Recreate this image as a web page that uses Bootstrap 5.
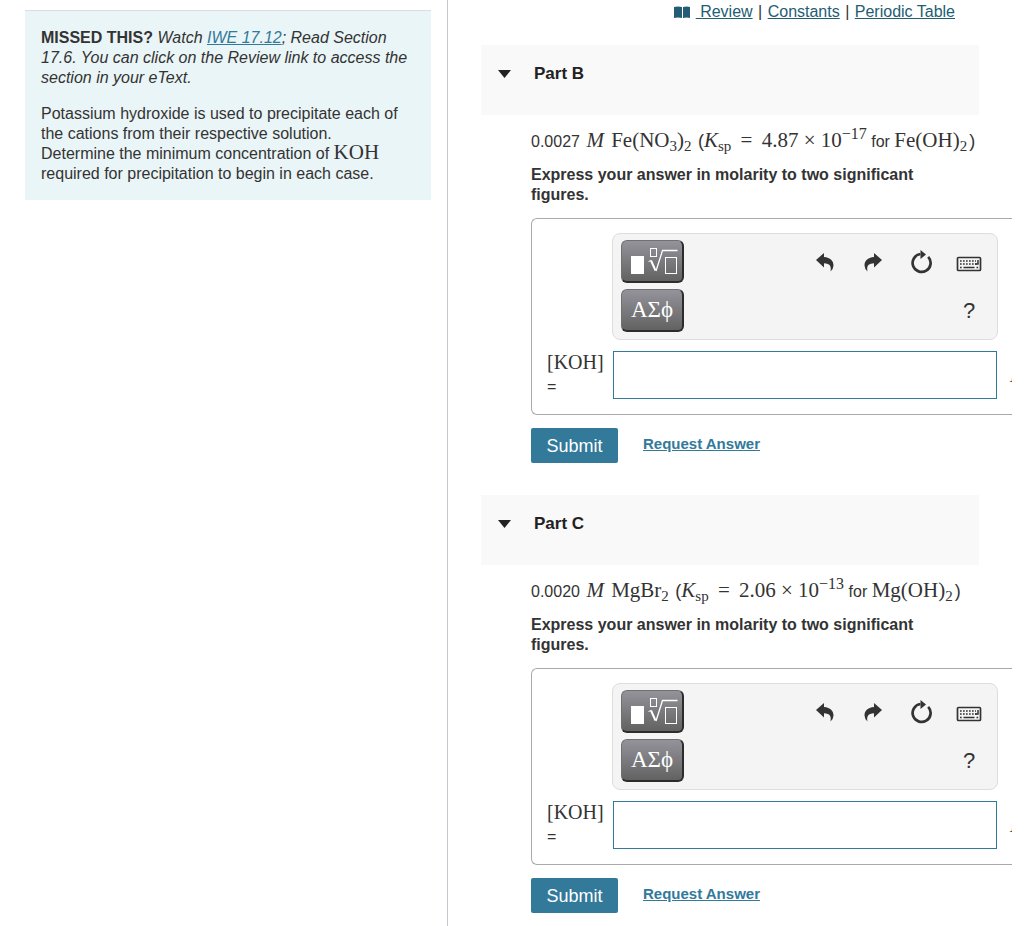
<!DOCTYPE html>
<html lang="en">
<head>
<meta charset="utf-8">
<meta name="viewport" content="width=device-width, initial-scale=1">
<title>Selective precipitation</title>
<link href="https://cdn.jsdelivr.net/npm/bootstrap@5.3.0/dist/css/bootstrap.min.css" rel="stylesheet">
<style>
body { font-family: "Liberation Sans", Arial, sans-serif; font-size: 16px; line-height: 20px; color: #333; background: #fff; }
a { color: #32799a; }
.intro-pane { flex: 0 0 43.75%; padding: 10px 16px 0 25px; border-right: 1px solid #c3c8cd; }
.intro-box { background: #eaf5f7; border-top: 1px solid #d9dddd; padding: 17px 16px 16px; }
.work-pane { padding: 0 12px 12px 33px; }
.top-links { padding: 2px 57px 0 0; height: 45px; }
.top-links a { color: #235d73; }
.sep { margin: 0 1px; }
.part-head { background: #f9f9f9; height: 70px; margin-right: 33px; padding: 19px 16px 0; }
.part-head h2 { font-size: 17px; line-height: 20px; color: #222; margin: 0 0 0 21px; }
.caret-btn { width: 16px; height: 20px; }
.part + .part { margin-top: 32px; }
.part-body { padding-left: 50px; padding-top: 6px; }
.statement { line-height: 40px; white-space: nowrap; }
.instruction { margin: 3px 48px 13px 0; }
.tex { font-family: "Liberation Serif", "Times New Roman", serif; font-size: 21px; line-height: 0; }
.tex sub, .tex sup { font-size: 15px; }
.tex sub { bottom: -4px; }
.tex sup { top: -8px; font-size: 16px; }
.molar { margin: 0 2px; }
.paren { font-size: 18px; margin-left: 2px; }
.op-eq { margin: 0 4px; }
.answer-box { border: 1px solid #aaa; border-right: 0; border-radius: 6px 0 0 6px; padding-top: 14px; padding-bottom: 15px; margin-bottom: 13px; }
.toolbar { margin: 0 14px 11px 80px; padding: 6px 4px 7px 8px; background: #f4f4f4; border: 1px solid #ddd; border-radius: 8px; }
.palette { gap: 6px; }
.palette-btn { width: 63px; height: 43px; padding: 0; border: 1px solid #707070; border-right: 2px solid #2c2c2c; border-bottom: 2px solid #2c2c2c; border-radius: 6px; background: linear-gradient(#94939b, #626262); color: #fff; }
.greek { font-size: 23px; }
.icon-btn { width: 48px; height: 43px; padding: 0; border: 0; background: none; color: #333; }
.help-btn { font-size: 22px; }
.answer-row { padding-left: 15px; }
.answer-label { flex: 0 0 66px; padding-top: 1px; line-height: 23px; }
.answer-label .tex { font-size: 20px; }
.answer-input { height: 48px; border: 1px solid #32799a; outline-color: #32799a; min-width: 0; }
.unit { flex: 0 0 3px; height: 48px; margin-left: 12px; padding-left: 1px; font-style: italic; line-height: 48px; }
.submit-btn { width: 87px; height: 35px; padding: 0; border: 0; border-radius: 2px; background: #32799a; color: #fff; font-size: 18px; }
.request { margin-left: 25px; font-size: 15px; margin-bottom: 3px; }
@media (max-width: 767px) { .intro-pane { border-right: 0; } .statement { white-space: normal; } }
</style>
</head>
<body>
<svg class="d-none" aria-hidden="true">
  <symbol id="templates" viewBox="0 0 52 30">
    <rect x="5" y="10" width="13" height="18" fill="#fff"/>
    <g fill="none" stroke="#fff"><rect x="24.500" y="2.500" width="6" height="8"/><rect x="39.500" y="11.500" width="11" height="16"/><path d="M30 25 36.500 4.500H51.500" stroke-width="1.300"/><path d="M22.500 15.500 25 14.500"/><path d="M25 14.500 29.500 24.500" stroke-width="2"/></g>
  </symbol>
  <symbol id="undo" viewBox="0 0 20 20"><path fill="currentColor" d="M1 8 9 1V5C15.500 5.500 18.500 9 18.500 13.500Q18.500 16.500 15.500 19.500C16.500 14.500 15 11.500 9 11.300V15.500Z"/></symbol>
  <symbol id="reset" viewBox="0 0 24 24"><path fill="none" stroke="currentColor" stroke-width="2.700" d="M19.200 6.800A9 9 0 1 1 11.500 4"/><path fill="currentColor" d="M11.500 0 17 4.500 11.500 9Z"/></symbol>
  <symbol id="keys" viewBox="0 0 26 16">
    <rect x="1.500" y="1.500" width="23" height="13" rx="1" fill="none" stroke="currentColor" stroke-width="1.700"/>
    <path fill="none" stroke="currentColor" stroke-width="1.500" stroke-dasharray="1.700 1.300" d="M4 5H20M4 8H21M4 11.500H6.500M20.500 11.500H23"/>
    <path fill="none" stroke="currentColor" stroke-width="1.500" d="M7.500 11.500H18.500M19 8H22V4"/>
  </symbol>
</svg>

<div class="d-md-flex min-vh-100">
  <aside class="intro-pane">
    <div class="intro-box">
      <p class="mb-3"><strong>MISSED THIS?</strong> <em>Watch <a href="#">IWE 17.12</a>; Read Section 17.6. You can click on the Review link to access the section in your eText.</em></p>
      <p class="mb-0">Potassium hydroxide is used to precipitate each of the cations from their respective solution.<br>Determine the minimum concentration of <span class="tex">KOH</span> required for precipitation to begin in each case.</p>
    </div>
  </aside>

  <main class="work-pane flex-grow-1">
    <nav class="top-links text-end" aria-label="Resources">
      <svg width="17" height="13" viewBox="0 0 17 13" aria-hidden="true"><path fill="#235d73" d="M0 1Q4 0 8 1V12Q4 11 0 12ZM9 1Q13 0 16 1V12Q13 11 9 12Z"/></svg>
      <a href="#">&nbsp;Review</a> <span class="sep">|</span> <a href="#">Constants</a> <span class="sep">|</span> <a href="#">Periodic Table</a>
    </nav>

    <section class="part">
      <div class="part-head d-flex align-items-start">
        <button class="caret-btn btn p-0 border-0 d-flex align-items-center" type="button" aria-label="Collapse Part B"><svg width="16" height="8" viewBox="0 0 16 8"><path fill="#222" d="M1 0H14L7.500 8Z"/></svg></button>
        <h2 class="fw-bold">Part B</h2>
      </div>
      <div class="part-body">
        <div class="statement">0.0027 <span class="tex"><i class="molar">M</i> Fe(NO<sub>3</sub>)<sub>2</sub></span> <span class="paren">(</span><span class="tex"><i>K</i><sub>sp</sub> <span class="op-eq">=</span> 4.87 × 10<sup>−17</sup></span> for <span class="tex">Fe(OH)<sub>2</sub></span><span class="paren">)</span></div>
        <p class="instruction fw-bold">Express your answer in molarity to two significant figures.</p>
        <div class="answer-box">
          <div class="toolbar d-flex justify-content-between">
            <div class="d-flex flex-column palette">
              <button class="palette-btn" type="button" aria-label="Templates"><svg width="52" height="30"><use href="#templates"/></svg></button>
              <button class="palette-btn tex greek" type="button">ΑΣϕ</button>
            </div>
            <div class="d-flex flex-column palette align-items-end">
              <div class="d-flex">
                <button class="icon-btn" type="button" aria-label="Undo"><svg width="20" height="20"><use href="#undo"/></svg></button>
                <button class="icon-btn" type="button" aria-label="Redo"><svg width="20" height="20"><use href="#undo" transform="matrix(-1 0 0 1 20 0)"/></svg></button>
                <button class="icon-btn" type="button" aria-label="Reset"><svg width="24" height="24"><use href="#reset"/></svg></button>
                <button class="icon-btn pt-1" type="button" aria-label="Keyboard shortcuts"><svg width="26" height="16"><use href="#keys"/></svg></button>
              </div>
              <button class="icon-btn help-btn" type="button">?</button>
            </div>
          </div>
          <div class="answer-row d-flex">
            <label class="answer-label" for="kohB"><span class="tex">[KOH]</span><br>=</label>
            <input class="answer-input flex-grow-1" id="kohB" type="text">
            <span class="unit tex overflow-hidden">M</span>
          </div>
        </div>
        <div class="d-flex align-items-center">
          <button class="submit-btn" type="button">Submit</button>
          <a class="request fw-bold" href="#">Request Answer</a>
        </div>
      </div>
    </section>

    <section class="part">
      <div class="part-head d-flex align-items-start">
        <button class="caret-btn btn p-0 border-0 d-flex align-items-center" type="button" aria-label="Collapse Part C"><svg width="16" height="8" viewBox="0 0 16 8"><path fill="#222" d="M1 0H14L7.500 8Z"/></svg></button>
        <h2 class="fw-bold">Part C</h2>
      </div>
      <div class="part-body">
        <div class="statement">0.0020 <span class="tex"><i class="molar">M</i> MgBr<sub>2</sub></span> <span class="paren">(</span><span class="tex"><i>K</i><sub>sp</sub> <span class="op-eq">=</span> 2.06 × 10<sup>−13</sup></span> for <span class="tex">Mg(OH)<sub>2</sub></span><span class="paren">)</span></div>
        <p class="instruction fw-bold">Express your answer in molarity to two significant figures.</p>
        <div class="answer-box">
          <div class="toolbar d-flex justify-content-between">
            <div class="d-flex flex-column palette">
              <button class="palette-btn" type="button" aria-label="Templates"><svg width="52" height="30"><use href="#templates"/></svg></button>
              <button class="palette-btn tex greek" type="button">ΑΣϕ</button>
            </div>
            <div class="d-flex flex-column palette align-items-end">
              <div class="d-flex">
                <button class="icon-btn" type="button" aria-label="Undo"><svg width="20" height="20"><use href="#undo"/></svg></button>
                <button class="icon-btn" type="button" aria-label="Redo"><svg width="20" height="20"><use href="#undo" transform="matrix(-1 0 0 1 20 0)"/></svg></button>
                <button class="icon-btn" type="button" aria-label="Reset"><svg width="24" height="24"><use href="#reset"/></svg></button>
                <button class="icon-btn pt-1" type="button" aria-label="Keyboard shortcuts"><svg width="26" height="16"><use href="#keys"/></svg></button>
              </div>
              <button class="icon-btn help-btn" type="button">?</button>
            </div>
          </div>
          <div class="answer-row d-flex">
            <label class="answer-label" for="kohC"><span class="tex">[KOH]</span><br>=</label>
            <input class="answer-input flex-grow-1" id="kohC" type="text">
            <span class="unit tex overflow-hidden">M</span>
          </div>
        </div>
        <div class="d-flex align-items-center">
          <button class="submit-btn" type="button">Submit</button>
          <a class="request fw-bold" href="#">Request Answer</a>
        </div>
      </div>
    </section>
  </main>
</div>
<script src="https://cdn.jsdelivr.net/npm/bootstrap@5.3.0/dist/js/bootstrap.bundle.min.js"></script>
</body>
</html>
